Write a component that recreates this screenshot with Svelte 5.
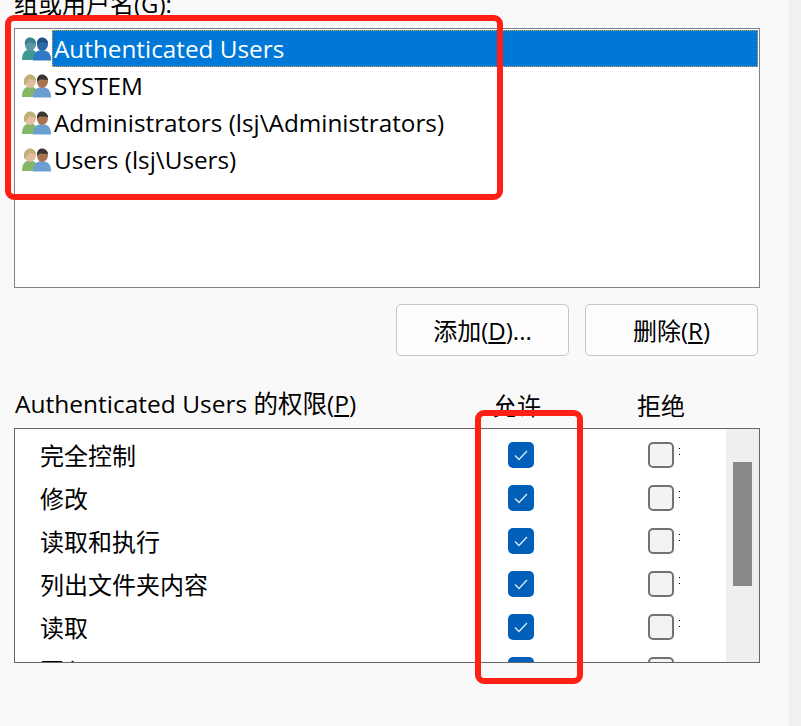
<script>
  const users = [
    { name: 'Authenticated Users', selected: true, kind: 'group' },
    { name: 'SYSTEM', kind: 'user' },
    { name: 'Administrators (lsj\\Administrators)', kind: 'user' },
    { name: 'Users (lsj\\Users)', kind: 'user' }
  ];
  const perms = ['完全控制', '修改', '读取和执行', '列出文件夹内容', '读取', '写入'];
</script>

{#snippet peopleIcon(kind)}
  <svg class="icon" width="30" height="24" viewBox="0 0 30 24" aria-hidden="true">
    {#if kind === 'group'}
      <path d="M0 23c0-6 2-9 5-10h6c3 1 5 4 5 10z" fill="#3f9a94"/>
      <path d="M3 7c0-4 2-6 5-6s6 2 6 6-3 7-6 7-5-3-5-7z" fill="#5e98a6"/>
      <path d="M3 8c-1-5 2-7.500 5-7.500s6 2 6 6c-3 0-6-1.500-8-1-1 1-1 3-3 2.500z" fill="#3e7f93"/>
      <path d="M11 23.500c0-6 2-9 6-10h6c4 1 6 4 6 10z" fill="#2f7ac4"/>
      <path d="M15 7c0-4 2-6 5-6s6 2 6 6-3 7-6 7-5-3-5-7z" fill="#2a69a8"/>
      <path d="M15 7c0-4 2-6.500 5-6.500s6 2.500 6 5.500c-3 0-7-1-9 0-1 1-1 2-2 1z" fill="#1f5387"/>
    {:else}
      <path d="M0 23c0-6 2-9 5-10h6c3 1 5 4 5 10z" fill="#84b765"/>
      <path d="M3 7c0-4 2-6 5-6s6 2 6 6-3 7-6 7-5-3-5-7z" fill="#e3bd9f"/>
      <path d="M2 10C1 3 5 .5 8 .5s6 2.500 6 6C11 6 8 4.500 7 5c-1 1-1 4-3 4l-.500 3z" fill="#bfb078"/>
      <path d="M11 23.500c0-6 2-9 6-10h6c4 1 6 4 6 10z" fill="#6b9fd2"/>
      <path d="M15 7c0-4 2-6 5-6s6 2 6 6-3 7-6 7-5-3-5-7z" fill="#a8744f"/>
      <path d="M15 7c0-4 2-6.500 5-6.500s6 2.500 6 5.500c-3 0-7-1-9 0-1 1-1 2-2 1z" fill="#3a3532"/>
    {/if}
  </svg>
{/snippet}

<main class="page">
  <div class="list-label"><span>组或用户名(<u>G</u>):</span></div>

  <div class="user-list">
    {#each users as user}
      <div class="user-row">
        {@render peopleIcon(user.kind)}
        <span class="user-name" class:selected={user.selected}>{user.name}</span>
      </div>
    {/each}
  </div>

  <div class="actions">
    <button>添加(<u>D</u>)...</button>
    <button>删除(<u>R</u>)</button>
  </div>

  <div class="perm-head">
    <span class="perm-title">Authenticated Users 的权限(<u>P</u>)</span>
    <span class="col head-allow">允许</span>
    <span class="col">拒绝</span>
    <span class="bar-gap"></span>
  </div>

  <div class="perm-box">
    <div class="perm-rows">
      {#each perms as perm}
        <div class="perm-row">
          <span class="perm-name">{perm}</span>
          <span class="col row-allow"><span class="check on">
            <svg width="16" height="12" viewBox="0 0 16 12" aria-hidden="true"><path d="M2 6.500 6 10.500 14 2" fill="none" stroke="#dfeaf6" stroke-width="1.300"/></svg>
          </span></span>
          <span class="col"><span class="check off"></span><span class="dots"></span></span>
        </div>
      {/each}
    </div>
    <div class="scrollbar"><div class="thumb"></div></div>
  </div>

  <div class="mark mark-users"></div>
  <div class="mark mark-allow"></div>
</main>

<style>
  :global(body) {
    margin: 0;
    background: #f9f9f9;
  }
  .page {
    position: relative;
    box-sizing: border-box;
    width: 801px;
    height: 726px;
    overflow: hidden;
    padding: 0 41px 0 14px;
    background: #f9f9f9;
    border-right: 12px solid #f0f0f0;
    color: #000;
    font-family: "Open Sans", "Noto Sans CJK SC", sans-serif;
    font-size: 24px;
  }
  .list-label {
    height: 28px;
    display: flex;
    align-items: flex-end;
    overflow: hidden;
    line-height: 32px;
  }
  .list-label span {
    display: block;
    margin-bottom: 8px;
    white-space: nowrap;
  }
  .user-list {
    box-sizing: border-box;
    width: 746px;
    height: 260px;
    padding: 1px;
    background: #fff;
    border: 1px solid #82828c;
  }
  .user-row {
    display: flex;
    align-items: center;
    height: 37px;
    padding-left: 6px;
  }
  .icon {
    flex: none;
    width: 30px;
  }
  .user-name {
    flex: 1;
    box-sizing: border-box;
    height: 37px;
    line-height: 35px;
    padding-left: 1px;
    font-size: 24.300px;
    white-space: nowrap;
    border: 1px solid transparent;
  }
  .user-name.selected {
    background: #0078d7;
    color: #fff;
    border: 1px dotted #e8a33c;
  }
  .actions {
    display: flex;
    justify-content: flex-end;
    gap: 16px;
    width: 744px;
    margin-top: 16px;
  }
  button {
    width: 173px;
    height: 52px;
    padding: 0 0 2px;
    background: #fdfdfd;
    border: 1px solid #c6c6c6;
    border-radius: 5px;
    color: #000;
    font: inherit;
  }
  .perm-head {
    display: flex;
    align-items: center;
    width: 746px;
    height: 48px;
    margin-top: 24px;
  }
  .perm-title {
    flex: 1;
    padding: 0 0 3px 1px;
    font-size: 24.500px;
    white-space: nowrap;
  }
  .col {
    position: relative;
    display: flex;
    justify-content: center;
    align-items: center;
    flex: none;
    width: 130px;
  }
  .head-allow {
    margin-right: 14px;
  }
  .row-allow {
    margin-right: 10px;
  }
  .bar-gap {
    flex: none;
    width: 34px;
  }
  .perm-box {
    display: flex;
    box-sizing: border-box;
    width: 746px;
    height: 235px;
    background: #fff;
    border: 1px solid #666;
  }
  .perm-rows {
    flex: 1;
    overflow: hidden;
    padding-top: 4px;
  }
  .perm-row {
    display: flex;
    align-items: center;
    height: 43px;
  }
  .perm-name {
    flex: 1;
    padding-left: 25px;
  }
  .check {
    display: flex;
    align-items: center;
    justify-content: center;
    box-sizing: border-box;
    width: 26px;
    height: 26px;
    border-radius: 5px;
  }
  .check.on {
    background: #005fb8;
  }
  .check.off {
    background: #f3f3f3;
    border: 2px solid #727272;
  }
  .dots {
    position: absolute;
    left: 83px;
    top: 50%;
    width: 1px;
    height: 7px;
    margin-top: -7px;
    background: linear-gradient(#000 0 1px, transparent 1px 6px, #000 6px);
  }
  .scrollbar {
    flex: none;
    box-sizing: border-box;
    width: 33px;
    padding: 33px 7px 0;
    background: #efefef;
  }
  .thumb {
    height: 124px;
    background: #898989;
  }
  .mark {
    position: absolute;
    box-sizing: border-box;
    border: 6px solid #ff2015;
    border-radius: 9px;
  }
  .mark-users {
    left: 5px;
    top: 15px;
    width: 498px;
    height: 185px;
  }
  .mark-allow {
    left: 475px;
    top: 410px;
    width: 108px;
    height: 274px;
  }
</style>
